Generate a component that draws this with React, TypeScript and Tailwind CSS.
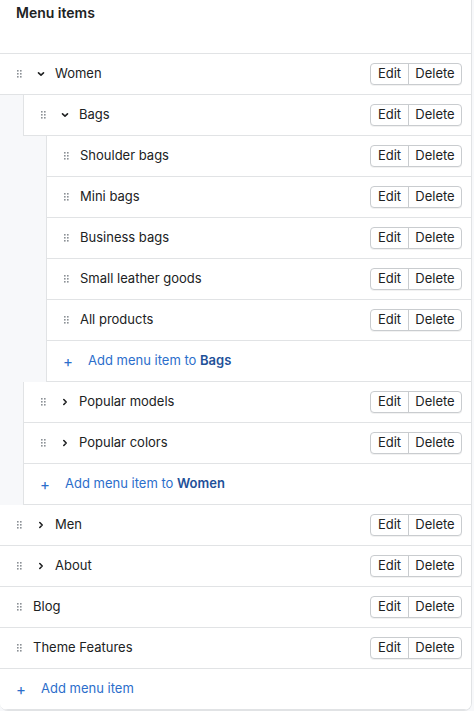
import React from "react";

type Node = { label: string; children?: Node[]; expanded?: boolean; hasChildren?: boolean };

const tree: Node[] = [
  {
    label: "Women",
    expanded: true,
    children: [
      {
        label: "Bags",
        expanded: true,
        children: [
          { label: "Shoulder bags" },
          { label: "Mini bags" },
          { label: "Business bags" },
          { label: "Small leather goods" },
          { label: "All products" },
        ],
      },
      { label: "Popular models", hasChildren: true },
      { label: "Popular colors", hasChildren: true },
    ],
  },
  { label: "Men", hasChildren: true },
  { label: "About", hasChildren: true },
  { label: "Blog" },
  { label: "Theme Features" },
];

function Grip() {
  return (
    <svg width="5" height="8" viewBox="0 0 5 8" className="shrink-0">
      {[0, 3, 6].map((y) =>
        [0, 3].map((x) => <rect key={`${x}-${y}`} x={x} y={y} width="1.6" height="1.6" fill="#8c9196" />)
      )}
    </svg>
  );
}

function Chevron({ down }: { down: boolean }) {
  return (
    <svg width="10" height="10" viewBox="0 0 10 10" className="shrink-0">
      {down ? (
        <path d="M2.5 3.8 L5 6.2 L7.5 3.8" fill="none" stroke="#202223" strokeWidth="1.6" strokeLinecap="round" strokeLinejoin="round" />
      ) : (
        <path d="M3.8 2.5 L6.2 5 L3.8 7.5" fill="none" stroke="#202223" strokeWidth="1.6" strokeLinecap="round" strokeLinejoin="round" />
      )}
    </svg>
  );
}

function Buttons() {
  return (
    <div className="flex h-[22px] rounded-[4px] border border-[#c9cccf] shadow-[0_1px_0_rgba(0,0,0,0.05)] text-[13px] text-[#202223] bg-white">
      <div className="w-[38px] flex items-center justify-center border-r border-[#c9cccf]">Edit</div>
      <div className="w-[52px] flex items-center justify-center">Delete</div>
    </div>
  );
}

function Row({ node, nested }: { node: Node; nested: boolean }) {
  const expandable = !!node.children || node.hasChildren;
  return (
    <div
      className={`h-[41px] flex items-center bg-white border-b border-[#e1e3e5] pr-[9px] ${
        nested ? "border-l" : ""
      }`}
    >
      <div className="w-[17px]" />
      <Grip />
      {expandable ? (
        <>
          <div className="w-[14px]" />
          <Chevron down={!!node.expanded} />
          <div className="w-[9px]" />
        </>
      ) : (
        <div className="w-[11px]" />
      )}
      <span className="flex-1 text-[13px] text-[#202223]">{node.label}</span>
      <Buttons />
    </div>
  );
}

function AddRow({ target, nested }: { target?: string; nested: boolean }) {
  return (
    <div
      className={`h-[41px] flex items-center bg-white border-b border-[#e1e3e5] ${nested ? "border-l" : ""} text-[13px] text-[#2c6ecb]`}
    >
      <span className="w-[41px] pl-[16px] text-[15px] leading-none">+</span>
      <span>
        {target ? (
          <>
            Add menu item to <span className="font-semibold text-[#1f5199]">{target}</span>
          </>
        ) : (
          "Add menu item"
        )}
      </span>
    </div>
  );
}

function Level({ nodes, nested, parent }: { nodes: Node[]; nested: boolean; parent?: string }) {
  return (
    <div>
      {nodes.map((n) => (
        <div key={n.label}>
          <Row node={n} nested={nested} />
          {n.children && n.expanded && (
            <div className="pl-[23px] bg-[#f7f8fa]">
              <Level nodes={n.children} nested={true} parent={n.label} />
            </div>
          )}
        </div>
      ))}
      <AddRow target={parent} nested={nested} />
    </div>
  );
}

export default function App() {
  return (
    <div className="w-[474px] h-[711px] bg-[#f7f8fa] overflow-hidden" style={{ fontFamily: "Inter, 'Noto Sans', sans-serif" }}>
      <div className="w-[472px] bg-white border-r border-b border-[#e1e3e5] rounded-br-[8px] rounded-bl-[8px] overflow-hidden">
        <div className="h-[53px] px-4 pt-[2px]">
          <h2 className="text-[14px] font-semibold text-[#202223]">Menu items</h2>
        </div>
        <div className="border-t border-[#e1e3e5]">
          <Level nodes={tree} nested={false} />
        </div>
      </div>
    </div>
  );
}
